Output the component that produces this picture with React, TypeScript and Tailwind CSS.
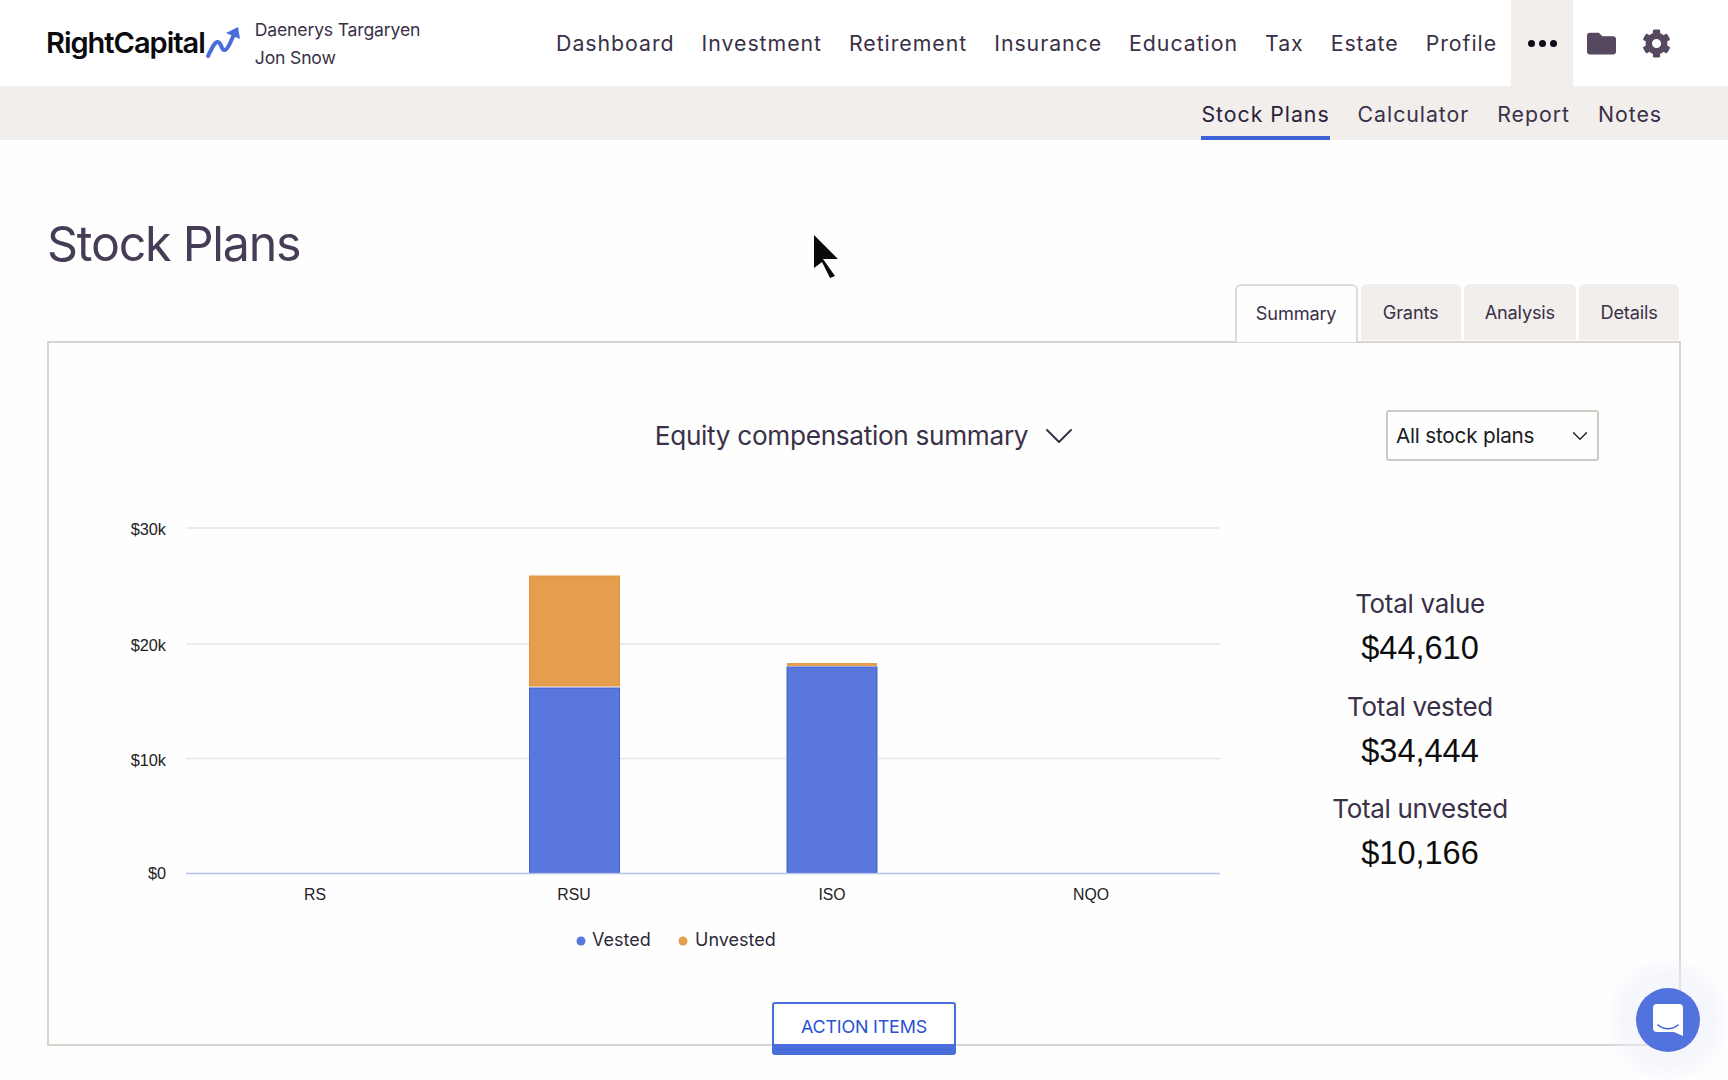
import { FaCog, FaFolder } from 'react-icons/fa';
import { ChevronDown } from 'lucide-react';

const navItems = ['Dashboard', 'Investment', 'Retirement', 'Insurance', 'Education', 'Tax', 'Estate', 'Profile'];
const subNavItems = ['Stock Plans', 'Calculator', 'Report', 'Notes'];
const tabs = [
  { label: 'Summary', active: true },
  { label: 'Grants', active: false },
  { label: 'Analysis', active: false },
  { label: 'Details', active: false },
];
const totals = [
  { label: 'Total value', value: '$44,610' },
  { label: 'Total vested', value: '$34,444' },
  { label: 'Total unvested', value: '$10,166' },
];
const yTicks = [
  { label: '$30k', y: 527 },
  { label: '$20k', y: 643 },
  { label: '$10k', y: 757.5 },
];
const xTicks = [
  { label: 'RS', x: 315 },
  { label: 'RSU', x: 574 },
  { label: 'ISO', x: 832 },
  { label: 'NQO', x: 1091 },
];

function Chart() {
  return (
    <svg width="1211" height="460" viewBox="49 500 1211 460" className="shrink-0">
      {yTicks.map((t) => (
        <g key={t.label}>
          <line x1="186" x2="1220" y1={t.y} y2={t.y} stroke="#e6e6ea" strokeWidth="1.5" />
          <text x="166" y={t.y + 7} textAnchor="end" fontSize="16.3" fill="#222" className="font-['Liberation_Sans']">{t.label}</text>
        </g>
      ))}
      <text x="166" y="878" textAnchor="end" fontSize="16.3" fill="#222" className="font-['Liberation_Sans']">$0</text>

      <rect x="529.5" y="575" width="90" height="110" fill="#e59e4d" stroke="#e0943e" />
      <rect x="529.5" y="687" width="90" height="185" fill="#5a77dd" stroke="#3f5fd6" />
      <rect x="787" y="662" width="90" height="3" fill="#e59e4d" />
      <rect x="787" y="666" width="90" height="206" fill="#5a77dd" stroke="#3f5fd6" />
      <line x1="186" x2="1220" y1="872.5" y2="872.5" stroke="#b6c2e8" strokeWidth="1.5" />

      {xTicks.map((t) => (
        <text key={t.label} x={t.x} y="899" textAnchor="middle" fontSize="15.8" fill="#222" className="font-['Liberation_Sans']">{t.label}</text>
      ))}

      <circle cx="581" cy="940" r="4.5" fill="#5a77dd" />
      <text x="592" y="945" fontSize="18" fill="#2e2a3a" className="font-['Inter']">Vested</text>
      <circle cx="683" cy="940" r="4.5" fill="#e59e4d" />
      <text x="695" y="945" fontSize="18" fill="#2e2a3a" className="font-['Inter']">Unvested</text>
    </svg>
  );
}

export default function App() {
  return (
    <div className="relative min-h-[1080px] overflow-hidden bg-[#fefefe] font-['Inter',sans-serif] text-[#3a3048]">
      {/* Top bar */}
      <header className="flex h-[86px] items-stretch bg-white">
        <div className="flex items-center pl-[46px]">
          <span className="text-[29px] font-semibold tracking-[-0.035em] text-[#0b0b0f]">RightCapital</span>
          <svg width="38" height="38" viewBox="0 0 38 38">
            <path d="M3 32 C7 24 10 17 13 18 C17 19 16 27 20 26 C24 25 26 15 31 7" fill="none" stroke="#4a6ddc" strokeWidth="4" strokeLinecap="round" />
            <path d="M21 9 L33 3 L35 15 Z" fill="#4a6ddc" />
          </svg>
        </div>
        <div className="ml-[12px] flex flex-col justify-center gap-[5px] text-[17.6px] leading-[23px] tracking-[-0.01em]">
          <span>Daenerys Targaryen</span>
          <span>Jon Snow</span>
        </div>
        <nav className="ml-auto flex items-center gap-[27px] pt-[2px] text-[21.3px] tracking-[0.045em]">
          {navItems.map((item) => (
            <span key={item}>{item}</span>
          ))}
        </nav>
        <div className="ml-[14px] flex w-[62px] items-center justify-center gap-[4px] bg-[#f1eeec]">
          <span className="size-[7px] rounded-full bg-[#0f0a1a]" />
          <span className="size-[7px] rounded-full bg-[#0f0a1a]" />
          <span className="size-[7px] rounded-full bg-[#0f0a1a]" />
        </div>
        <div className="flex items-center gap-[26px] pl-[14px] pr-[57px] text-[#56485f]">
          <FaFolder className="size-[29px]" />
          <FaCog className="size-[29px]" />
        </div>
      </header>

      {/* Sub nav */}
      <div className="flex h-[54px] items-stretch justify-end gap-[28px] bg-[#f1eeec] pr-[66px] text-[21.3px] tracking-[0.045em]">
        {subNavItems.map((item, i) => (
          <span
            key={item}
            className={i === 0 ? 'flex items-center border-b-4 border-[#3f62d8] pt-[7px] text-[#2a2238]' : 'flex items-center border-b-4 border-transparent pt-[7px]'}
          >
            {item}
          </span>
        ))}
      </div>

      <main className="px-[47px]">
        <h1 className="mt-[77px] h-[54px] text-[48.3px] leading-[54px] tracking-[-0.025em] text-[#463c55]">Stock Plans</h1>

        {/* Tabs */}
        <div className="relative z-10 mt-[13px] flex justify-end gap-[3px] pr-[2px] text-[18.2px] tracking-[-0.01em]">
          {tabs.map((tab) => (
            <div
              key={tab.label}
              className={
                tab.active
                  ? 'flex h-[58px] min-w-[123px] items-center justify-center rounded-t-md border-2 border-b-0 border-[#dedbe0] bg-[#fefefe] pb-[1px] -mb-px'
                  : 'flex h-[56px] min-w-[100px] items-center justify-center rounded-t-md bg-[#f1eeec] px-[21px] pt-[2px]'
              }
            >
              {tab.label}
            </div>
          ))}
        </div>

        {/* Panel */}
        <section className="relative h-[705px] w-full border-2 border-[#d8d4ce] pt-[67px]">
          <div className="grid grid-cols-[1fr_auto_1fr] items-center">
            <div />
            <div className="flex h-[36px] items-center gap-[7px] pl-[10px] pt-[1px] text-[26.2px] tracking-[-0.012em]">
              Equity compensation summary
              <ChevronDown className="size-[48px]" strokeWidth={1} />
            </div>
            <div className="flex justify-end pr-[80px]">
              <div className="flex h-[51px] w-[213px] items-center justify-between rounded-[3px] border-2 border-[#cfcac3] pl-[8px] pr-[4px] text-[20.7px] tracking-[-0.01em] text-[#1a1a1f]">
                All stock plans
                <ChevronDown className="size-[26px]" strokeWidth={1.2} />
              </div>
            </div>
          </div>

          <div className="mt-[40px] flex">
            <Chart />
            <div className="flex w-[320px] flex-col items-center gap-[15.5px] pt-[85px]">
              {totals.map((t) => (
                <div key={t.label} className="flex flex-col items-center">
                  <span className="h-[37px] text-[26px] leading-[36px] tracking-[-0.012em]">{t.label}</span>
                  <span className="h-[50px] font-['Liberation_Sans'] text-[32.5px] leading-[50px] text-[#0d0d0d]">{t.value}</span>
                </div>
              ))}
            </div>
          </div>

          <button className="absolute bottom-[-11px] left-[723px] h-[53px] w-[184px] rounded-[3px] border-2 border-b-[11px] border-[#4a6ddc] bg-white pt-[6px] text-[17.9px] tracking-[-0.01em] text-[#2a50d4]">
            ACTION ITEMS
          </button>
        </section>
      </main>

      {/* Chat bubble */}
      <div className="absolute left-[1604px] top-[956px] flex size-[128px] items-center justify-center rounded-full bg-[radial-gradient(circle,rgba(236,240,252,0.5)_50%,rgba(236,240,252,0)_72%)]">
        <div className="flex size-[64px] items-center justify-center rounded-full bg-[#5272de]">
          <svg width="30" height="32" viewBox="0 0 30 32">
            <path d="M4 0 H26 A4 4 0 0 1 30 4 V32 L21 28 H4 A4 4 0 0 1 0 24 V4 A4 4 0 0 1 4 0 Z" fill="#fff" />
            <path d="M5 21 C11 26 19 26 25 21" fill="none" stroke="#3f62d8" strokeWidth="1.6" strokeLinecap="round" />
          </svg>
        </div>
      </div>

      {/* Mouse cursor */}
      <svg width="30" height="46" viewBox="0 0 30 46" className="absolute left-[812px] top-[233px]">
        <path d="M2 2 L26 26 L11 26 L23 43 L18 45 L10 29 L2 35 Z" fill="#0a0a0a" />
      </svg>
    </div>
  );
}
